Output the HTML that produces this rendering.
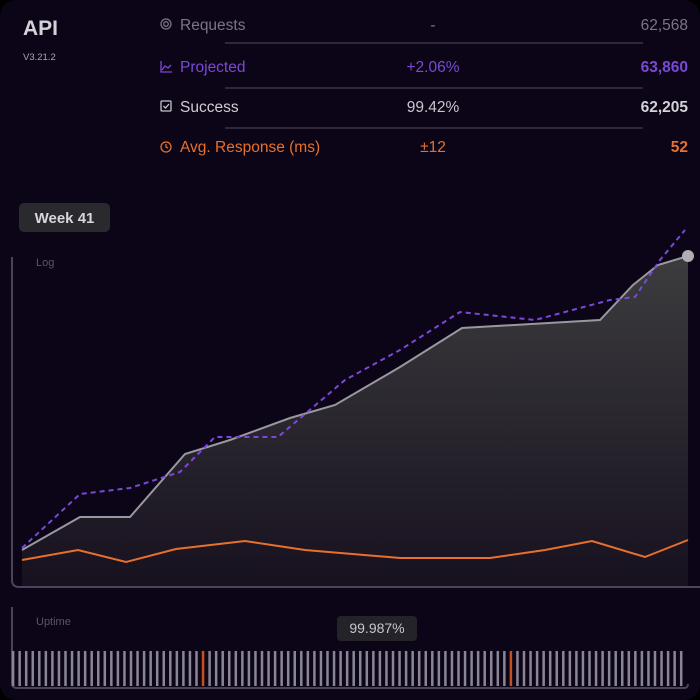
<!DOCTYPE html>
<html><head><style>
html,body{margin:0;padding:0;background:#000;}
.card{position:absolute;left:0;top:0;width:700px;height:700px;background:#0c0518;border-radius:16px;overflow:hidden;font-family:"Liberation Sans",sans-serif;}
.t{position:absolute;white-space:nowrap;}
</style></head><body>
<div class="card">
<div class="t" style="left:23px;top:17px;font-size:21px;font-weight:bold;color:#d4d2d8;">API</div>
<div class="t" style="left:23px;top:52px;font-size:9.5px;color:#a9a6b0;">V3.21.2</div>

<svg width="700" height="700" style="position:absolute;left:0;top:0">
<g stroke="#3a3446" stroke-width="1.5">
<line x1="225" y1="43" x2="643" y2="43"/><line x1="225" y1="88" x2="643" y2="88"/><line x1="225" y1="128" x2="643" y2="128"/>
</g>
<g fill="none" stroke-width="1.3">
<circle cx="166" cy="24" r="5" stroke="#7a7584"/><circle cx="166" cy="24" r="2.3" stroke="#7a7584"/>
<path d="M161 61 V72 H172 M162 70 L165 66 L168 68 L171 65" stroke="#7b48d8"/>
<rect x="161" y="101" width="10" height="10" rx="1" stroke="#c8c6cc"/><path d="M163.5 106 L165.5 108 L169 104" stroke="#c8c6cc"/>
<circle cx="166" cy="147" r="5" stroke="#e8702a"/><path d="M166 144 V147 L168 148" stroke="#e8702a"/>
</g>
<g font-size="15.5" font-family="Liberation Sans">
<text x="180" y="30" fill="#7a7584">Requests</text>
<text x="180" y="72" fill="#7b48d8">Projected</text>
<text x="180" y="112" fill="#d0ced4">Success</text>
<text x="180" y="152" fill="#e8702a">Avg. Response (ms)</text>
</g>
<g font-size="15.5" font-family="Liberation Sans" text-anchor="middle">
<text x="433" y="30" fill="#7a7584">-</text>
<text x="433" y="72" fill="#7b48d8">+2.06%</text>
<text x="433" y="112" fill="#c8c6cc">99.42%</text>
<text x="433" y="152" fill="#e8702a">±12</text>
</g>
<g font-size="15.5" font-family="Liberation Sans" text-anchor="end">
<text x="688" y="30" fill="#7a7584">62,568</text>
<text x="688" y="72" fill="#7b48d8" font-weight="bold">63,860</text>
<text x="688" y="112" fill="#d4d2d8" font-weight="bold">62,205</text>
<text x="688" y="152" fill="#e8702a" font-weight="bold">52</text>
</g>

<rect x="19" y="203" width="91" height="29" rx="5" fill="#2a2a2e"/>
<text x="64.5" y="223" font-size="15" font-weight="bold" fill="#d8d6dc" text-anchor="middle" font-family="Liberation Sans">Week 41</text>
<text x="36" y="266" font-size="11" fill="#5a5468" font-family="Liberation Sans">Log</text>

<defs><linearGradient id="g" x1="0" y1="0" x2="0" y2="1"><stop offset="0" stop-color="#3c3c3e"/><stop offset="1" stop-color="#17111f"/></linearGradient></defs>
<path d="M22 550 L80 517 L130 517 L185 454 L230 440 L290 418 L335 405 L400 367 L462 328 L600 320 L633 285 L658 265 L688 256 L688 587 L22 587Z" fill="url(#g)"/>
<path d="M22 550 L80 517 L130 517 L185 454 L230 440 L290 418 L335 405 L400 367 L462 328 L600 320 L633 285 L658 265 L688 256" fill="none" stroke="#9a989e" stroke-width="2"/>
<circle cx="688" cy="256" r="6" fill="#b0aeb4"/>
<path d="M22 548 L80 494 L130 488 L180 472 L215 437 L278 437 L345 380 L400 350 L460 312 L535 320 L610 300 L635 297 L660 260 L685 230" fill="none" stroke="#7b48d8" stroke-width="2" stroke-dasharray="5 4"/>
<path d="M22 560 L78 550 L126 562 L176 549 L245 541 L305 550 L400 558 L490 558 L545 550 L592 541 L645 557 L688 540" fill="none" stroke="#e8702a" stroke-width="2"/>
<path d="M12 257 V580 Q12 587 19 587 H700" fill="none" stroke="#4a4458" stroke-width="2"/>

<text x="36" y="625" font-size="11" fill="#5a5468" font-family="Liberation Sans">Uptime</text>
<rect x="337" y="616" width="80" height="25" rx="4" fill="#25232a"/>
<text x="377" y="633" font-size="14" fill="#c8c6cc" text-anchor="middle" font-family="Liberation Sans">99.987%</text>
<path d="M12 607 V683 Q12 688 17 688 H684 Q688 688 688 684" fill="none" stroke="#4a4458" stroke-width="2"/>
<g id="bars"></g>
</svg>
<script>
var g=document.getElementById('bars'),s='';
for(var i=0;i<103;i++){var x=13.05+i*6.55;var c=(i==29||i==76)?'#c8501c':'#8a8594';s+='<rect x="'+(x-1.2).toFixed(2)+'" y="651" width="2.5" height="35" fill="'+c+'"/>';}
g.innerHTML=s;
</script>
</div>
</body></html>
